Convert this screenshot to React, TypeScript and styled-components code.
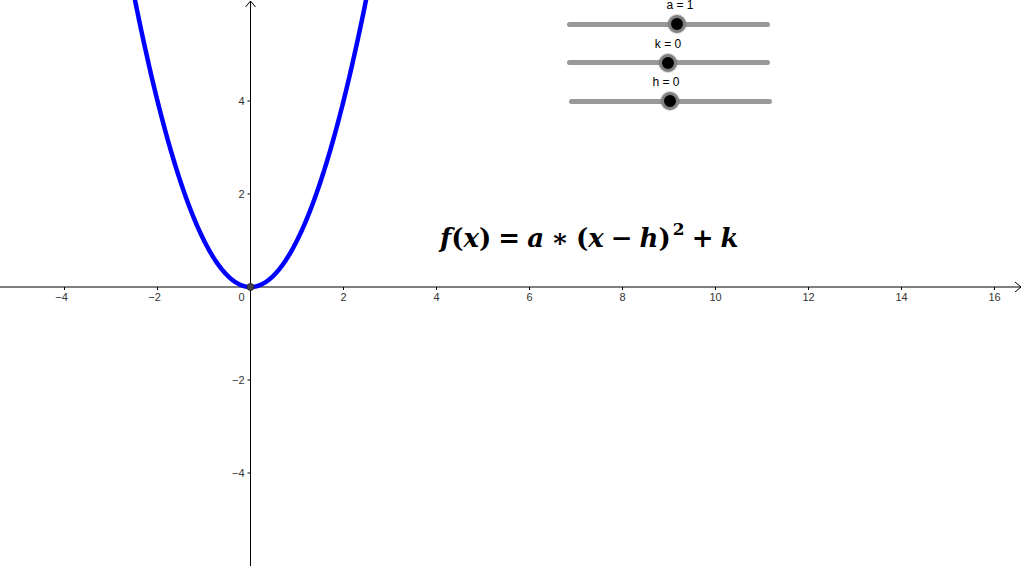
import React from "react";
import styled, { createGlobalStyle } from "styled-components";

const GlobalStyle = createGlobalStyle`
  html, body { margin: 0; padding: 0; background: #ffffff; }
  body { font-family: "Liberation Sans", Arial, sans-serif; overflow: hidden; }
`;

const OX = 250.5;
const OY = 287;
const S = 46.5;
const W = 1024;
const H = 566;

const px = (x: number) => OX + x * S;
const py = (y: number) => OY - y * S;

const Canvas = styled.div`
  position: relative;
  width: ${W}px;
  height: ${H}px;
  overflow: hidden;
  background: #ffffff;
`;

const GraphSvg = styled.svg`
  position: absolute;
  left: 0;
  top: 0;
  display: block;
`;

const TickLabel = styled.text`
  font-family: "Liberation Sans", Arial, sans-serif;
  font-size: 11px;
  fill: #333333;
`;

const SliderPanel = styled.div`
  position: absolute;
  left: 567px;
  top: 0;
  width: 206px;
  display: flex;
  flex-direction: column;
  gap: 1.5px;
`;

const SliderRow = styled.div<{ $shift: number }>`
  display: flex;
  flex-direction: column;
  width: 203px;
  margin-left: ${(p) => p.$shift}px;
`;

const SliderLabel = styled.div<{ $pos: number }>`
  align-self: flex-start;
  margin-left: ${(p) => p.$pos}px;
  transform: translateX(-50%);
  font-family: "Liberation Sans", Arial, sans-serif;
  font-size: 12px;
  line-height: 11px;
  height: 11px;
  color: #000000;
  white-space: nowrap;
`;

const TrackArea = styled.div`
  position: relative;
  height: 26px;
  display: flex;
  align-items: center;
`;

const Track = styled.div`
  flex: 1;
  height: 5px;
  border-radius: 3px;
  background: #999999;
`;

const Knob = styled.div<{ $pos: number }>`
  position: absolute;
  left: ${(p) => p.$pos}px;
  top: 50%;
  width: 12px;
  height: 12px;
  transform: translate(-50%, -50%);
  border-radius: 50%;
  background: #000000;
  border: 3px solid #808080;
  box-shadow: 0 0 0 1px rgba(120, 120, 120, 0.35);
`;

const Formula = styled.div`
  position: absolute;
  left: 440px;
  top: 218px;
  font-family: "DejaVu Serif", "Liberation Serif", serif;
  font-weight: bold;
  font-size: 26px;
  line-height: 40px;
  color: #000000;
  white-space: nowrap;
`;

const V = styled.span`
  font-style: italic;
`;

const Op = styled.span`
  margin: 0 7px;
`;

const Sup = styled.sup`
  font-size: 17px;
  vertical-align: 0;
  position: relative;
  top: -12px;
  margin-left: 2px;
`;

type SliderProps = { knob: number; label: string; labelPos: number; shift?: number };

const Slider: React.FC<SliderProps> = ({ knob, label, labelPos, shift = 0 }) => (
  <SliderRow $shift={shift}>
    <SliderLabel $pos={labelPos}>{label}</SliderLabel>
    <TrackArea>
      <Track />
      <Knob $pos={knob} />
    </TrackArea>
  </SliderRow>
);

function parabolaPath(): string {
  const pts: string[] = [];
  for (let i = 0; i <= 300; i++) {
    const x = -2.7 + (5.4 * i) / 300;
    const y = x * x;
    pts.push(`${i === 0 ? "M" : "L"}${px(x).toFixed(2)},${py(y).toFixed(2)}`);
  }
  return pts.join(" ");
}

const xTicks = [-4, -2, 2, 4, 6, 8, 10, 12, 14, 16];
const yTicks = [4, 2, -2, -4];

const fmt = (n: number) => (n < 0 ? `\u2212${Math.abs(n)}` : `${n}`);

export default function App() {
  return (
    <>
      <GlobalStyle />
      <Canvas>
        <GraphSvg width={W} height={H} viewBox={`0 0 ${W} ${H}`}>
          <line x1={0} y1={OY} x2={1021} y2={OY} stroke="#000" strokeWidth={1} />
          <polyline points={`1015,${OY - 5} 1021,${OY} 1015,${OY + 5}`} fill="none" stroke="#000" strokeWidth={1} />
          <line x1={OX} y1={1} x2={OX} y2={H} stroke="#000" strokeWidth={1} />
          <polyline points={`${OX - 5},7 ${OX},1 ${OX + 5},7`} fill="none" stroke="#000" strokeWidth={1} />
          {xTicks.map((t) => (
            <g key={`x${t}`}>
              <line x1={px(t)} y1={OY} x2={px(t)} y2={OY + 3} stroke="#000" strokeWidth={1} />
              <TickLabel x={px(t) + (t < 0 ? -3 : 0)} y={OY + 14} textAnchor="middle">
                {fmt(t)}
              </TickLabel>
            </g>
          ))}
          <TickLabel x={OX - 6} y={OY + 14} textAnchor="end">0</TickLabel>
          {yTicks.map((t) => (
            <g key={`y${t}`}>
              <line x1={OX - 3} y1={py(t)} x2={OX} y2={py(t)} stroke="#000" strokeWidth={1} />
              <TickLabel x={OX - 6} y={py(t) + 4} textAnchor="end">
                {fmt(t)}
              </TickLabel>
            </g>
          ))}
          <path d={parabolaPath()} fill="none" stroke="#0000ff" strokeWidth={4.5} strokeLinejoin="round" />
          <circle cx={OX} cy={OY} r={3.5} fill="#444444" stroke="#222" strokeWidth={0.8} />
        </GraphSvg>

        <SliderPanel>
          <Slider knob={110} label="a = 1" labelPos={113} />
          <Slider knob={101} label="k = 0" labelPos={101} />
          <Slider knob={101} label="h = 0" labelPos={97} shift={2} />
        </SliderPanel>

        <Formula>
          <V>f</V>(<V>x</V>)<Op>=</Op><V>a</V><Op>∗</Op>(<V>x</V><Op>−</Op><V>h</V>)<Sup>2</Sup>
          <Op>+</Op>
          <V>k</V>
        </Formula>
      </Canvas>
    </>
  );
}
